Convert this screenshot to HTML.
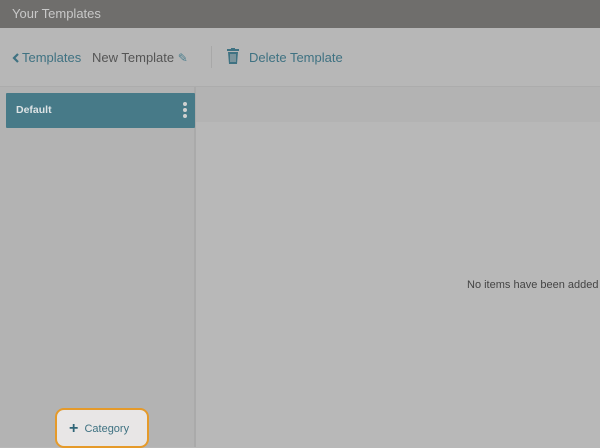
<!DOCTYPE html>
<html><head><style>
body{margin:0;width:600px;height:447px;overflow:hidden;background:#b8b8b8;font-family:"Liberation Sans",sans-serif;position:relative}
.hdr{position:absolute;left:0;top:0;width:600px;height:28px;background:#6f6e6c;color:#c8c8c8;font-size:13px;line-height:28px;padding-left:12px;box-sizing:border-box}
.tb{position:absolute;left:0;top:28px;width:600px;height:58px;background:#b7b7b7;border-bottom:1px solid #acacac}
.t{position:absolute;top:22px;font-size:13px;color:#3f7282}
.side{position:absolute;left:0;top:87px;width:194px;height:360px;background:#b3b3b3;border-right:2px solid #aaa}
.band{position:absolute;left:196px;top:87px;width:404px;height:35px;background:#b3b3b3}
.def{position:absolute;left:6px;top:93px;width:189px;height:35px;background:#477a88;color:#dde3e5;font-weight:bold;font-size:10.5px;line-height:35px;padding-left:10px;box-sizing:border-box;border-radius:1px}
.dot{position:absolute;left:183px;width:4px;height:4px;border-radius:50%;background:#d0d0d0}
.btn{position:absolute;left:55px;top:408px;width:94px;height:40px;box-sizing:border-box;border:2px solid #e59a2a;border-radius:9px;background:#e8e6e6;color:#3f7282;font-size:11px;line-height:38px;padding-left:12px}
</style></head><body>
<div class="hdr">Your Templates</div>
<div class="tb">
<svg style="position:absolute;left:12px;top:25px" width="7" height="10" viewBox="0 0 7 10"><path d="M6 1L2 5l4 4" stroke="#3f7282" stroke-width="2.2" fill="none"/></svg>
<span class="t" style="left:22px">Templates</span>
<span class="t" style="left:92px;color:#555">New Template <span style="color:#4c7f8e;font-size:12px">&#9998;</span></span>
<div style="position:absolute;left:211px;top:18px;width:1px;height:22px;background:#a8a8a8"></div>
<svg style="position:absolute;left:227px;top:20px" width="12" height="16" viewBox="0 0 12 16"><rect x="0" y="1" width="12" height="2" fill="#3f7282"/><rect x="4" y="0" width="4" height="2" fill="#3f7282"/><path d="M1 4h10l-1 12H2z" fill="#3f7282"/><path d="M4 6v8M6 6v8M8 6v8" stroke="#b7b7b7" stroke-width="1"/></svg>
<span class="t" style="left:249px">Delete Template</span>
</div>
<div class="side"></div>
<div class="band"></div>
<div class="def">Default</div>
<div class="dot" style="top:102px"></div><div class="dot" style="top:108px"></div><div class="dot" style="top:114px"></div>
<div style="position:absolute;left:467px;top:279px;font-size:11px;color:#444;white-space:nowrap">No items have been added</div>
<div class="btn"><b style="font-size:16px;color:#2f6577;vertical-align:-1px">+</b>&nbsp; Category</div>
</body></html>
